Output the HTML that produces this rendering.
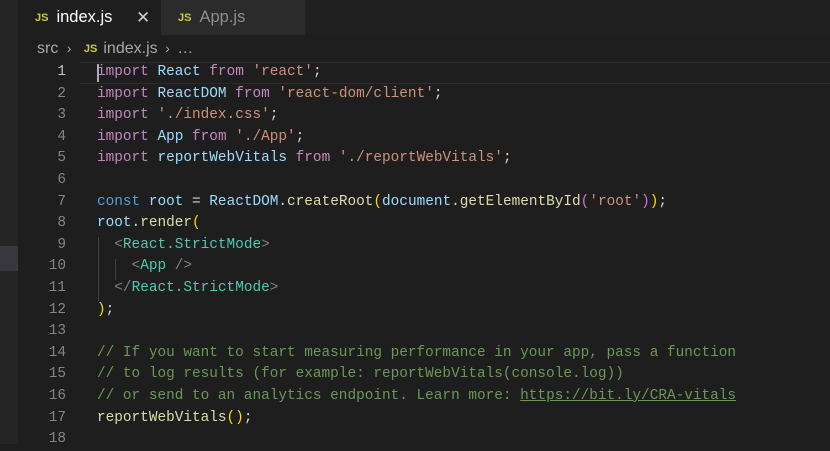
<!DOCTYPE html>
<html><head><style>
body{margin:0;width:830px;height:444px;background:#1e1e1e;overflow:hidden;position:relative;font-family:"Liberation Sans",sans-serif}
.strip{position:absolute;left:0;top:0;width:18px;height:444px;background:#252526}
.sel{position:absolute;left:0;top:246px;width:18px;height:25px;background:#37373d}
.tabbar{position:absolute;left:18px;top:0;right:0;height:35px;background:#202020}
.tab{position:absolute;top:0;height:35px;line-height:35px;font-size:16.5px}
.js{color:#cbcb41;font-weight:bold;font-size:11px;margin-right:8px;vertical-align:1px}
.t1{left:0;width:143px;background:#1e1e1e;color:#fff;padding-left:17px;box-sizing:border-box}
.t2{left:143px;width:144px;background:#2b2b2b;color:#8d8d8d;padding-left:17px;box-sizing:border-box}
.x{position:absolute;left:118px;top:0;color:#ccc;font-size:17px}
.bc{position:absolute;left:37px;top:38px;font-size:16px;color:#a9a9a9;line-height:20px}
.code{position:absolute;left:0;top:62px;font-family:"Liberation Mono",monospace;font-size:14.4px}
.l{height:21.6px;line-height:21.6px;white-space:pre;position:relative}
.n{position:absolute;left:0;width:66px;text-align:right;color:#858585}
.c{position:absolute;left:97px;color:#d4d4d4}
.cur .n{color:#c6c6c6}
.hl{position:absolute;left:80px;top:62px;width:750px;height:20px;border-top:1px solid #2c2c2c;border-bottom:1px solid #2c2c2c}
.k{color:#c586c0}.v{color:#9cdcfe}.s{color:#ce9178}.b{color:#569cd6}.f{color:#dcdcaa}.y{color:#ffd700}.tg{color:#4ec9b0}.g{color:#808080}.cm{color:#6a9955}.p{color:#da70d6}
.guide{position:absolute;left:98px;top:237px;width:1px;height:64px;background:#404040}
.guide2{position:absolute;left:115px;top:259px;width:1px;height:21px;background:#404040}
.caret{position:absolute;left:97px;top:64px;width:2px;height:18px;background:#aeafad}
</style></head><body>
<div class="strip"></div><div class="sel"></div>
<div class="tabbar">
<div class="tab t1"><span class="js">JS</span>index.js<span class="x">✕</span></div>
<div class="tab t2"><span class="js">JS</span>App.js</div>
</div>
<div class="bc">src <span style="font-size:14px;margin:0 4px">›</span> <span class="js" style="margin:0 6px 0 4px">JS</span>index.js <span style="font-size:14px;margin:0 3px">›</span> …</div>
<div class="hl"></div>
<div class="guide"></div><div class="guide2"></div>
<div class="code">
<div class="l cur"><span class="n">1</span><span class="c"><span class="k">import</span> <span class="v">React</span> <span class="k">from</span> <span class="s">'react'</span>;</span></div>
<div class="l"><span class="n">2</span><span class="c"><span class="k">import</span> <span class="v">ReactDOM</span> <span class="k">from</span> <span class="s">'react-dom/client'</span>;</span></div>
<div class="l"><span class="n">3</span><span class="c"><span class="k">import</span> <span class="s">'./index.css'</span>;</span></div>
<div class="l"><span class="n">4</span><span class="c"><span class="k">import</span> <span class="v">App</span> <span class="k">from</span> <span class="s">'./App'</span>;</span></div>
<div class="l"><span class="n">5</span><span class="c"><span class="k">import</span> <span class="v">reportWebVitals</span> <span class="k">from</span> <span class="s">'./reportWebVitals'</span>;</span></div>
<div class="l"><span class="n">6</span></div>
<div class="l"><span class="n">7</span><span class="c"><span class="b">const</span> <span class="v">root</span> = <span class="v">ReactDOM</span>.<span class="f">createRoot</span><span class="y">(</span><span class="v">document</span>.<span class="f">getElementById</span><span class="p">(</span><span class="s">'root'</span><span class="p">)</span><span class="y">)</span>;</span></div>
<div class="l"><span class="n">8</span><span class="c"><span class="v">root</span>.<span class="f">render</span><span class="y">(</span></span></div>
<div class="l"><span class="n">9</span><span class="c">  <span class="g">&lt;</span><span class="tg">React.StrictMode</span><span class="g">&gt;</span></span></div>
<div class="l"><span class="n">10</span><span class="c">    <span class="g">&lt;</span><span class="tg">App</span> <span class="g">/&gt;</span></span></div>
<div class="l"><span class="n">11</span><span class="c">  <span class="g">&lt;/</span><span class="tg">React.StrictMode</span><span class="g">&gt;</span></span></div>
<div class="l"><span class="n">12</span><span class="c"><span class="y">)</span>;</span></div>
<div class="l"><span class="n">13</span></div>
<div class="l"><span class="n">14</span><span class="c cm">// If you want to start measuring performance in your app, pass a function</span></div>
<div class="l"><span class="n">15</span><span class="c cm">// to log results (for example: reportWebVitals(console.log))</span></div>
<div class="l"><span class="n">16</span><span class="c cm">// or send to an analytics endpoint. Learn more: <u>https://bit.ly/CRA-vitals</u></span></div>
<div class="l"><span class="n">17</span><span class="c"><span class="f">reportWebVitals</span><span class="y">()</span>;</span></div>
<div class="l"><span class="n">18</span></div>
</div>
<div class="caret"></div>
</body></html>
